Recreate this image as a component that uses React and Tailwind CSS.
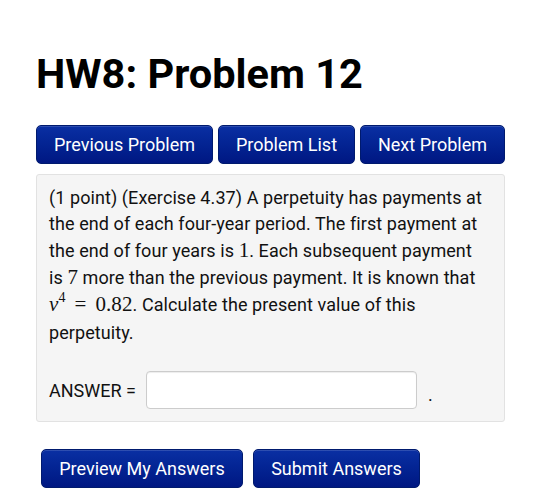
import React, { useState } from "react";

const btn =
  "h-[39px] rounded-[5px] border border-[#001a6e] bg-gradient-to-b from-[#0a2fa3] to-[#001782] text-white text-[18px] leading-none font-['Roboto',sans-serif] shadow-[inset_0_1px_0_rgba(255,255,255,0.15)]";

function M({ children, className = "" }) {
  return <span className={"font-['Liberation_Serif',serif] text-[21px] " + className}>{children}</span>;
}

export default function App() {
  const [answer, setAnswer] = useState("");

  return (
    <div className="min-h-[489px] w-[535px] bg-white font-['Roboto',sans-serif] text-[#111]">
      <div className="pl-[36px] pt-[51px]">
        <h1 className="text-[41.5px] leading-[46px] font-bold text-black">HW8: Problem 12</h1>

        <div className="mt-[28px] flex gap-[5px]">
          <button className={btn + " w-[177px]"}>Previous Problem</button>
          <button className={btn + " w-[137px]"}>Problem List</button>
          <button className={btn + " w-[145px]"}>Next Problem</button>
        </div>

        <div className="mt-[10px] w-[469px] rounded-[3px] border border-[#e2e2e2] bg-[#f5f5f5] px-[12px] pt-[10px] pb-[12px]">
          <p className="text-[18px] leading-[26px] whitespace-nowrap tracking-[0.08px]">
            (1 point) (Exercise 4.37) A perpetuity has payments at
            <br />
            the end of each four-year period. The first payment at
            <br />
            the end of four years is <M>1</M>. Each subsequent payment
            <br />
            is <M>7</M> more than the previous payment. It is known that
            <br />
            <M>
              <span className="italic">v</span>
              <span className="relative -top-[9px] text-[14px]">4</span>
              <span className="mx-[9px]">=</span>0.82
            </M>
            . Calculate the present value of this
            <br />
            perpetuity.
          </p>

          <div className="mt-[25px] flex items-center">
            <span className="text-[18px]">ANSWER =</span>
            <input
              value={answer}
              onChange={e => setAnswer(e.target.value)}
              className="ml-[10px] h-[38px] w-[271px] rounded-[4px] border border-[#cccccc] bg-white px-2 text-[18px] outline-none shadow-[inset_0_1px_1px_rgba(0,0,0,0.075)]"
            />
            <span className="ml-[11px] mt-[8px] text-[18px]">.</span>
          </div>
        </div>

        <div className="mt-[27px] ml-[5px] flex gap-[10px]">
          <button className={btn + " w-[202px]"}>Preview My Answers</button>
          <button className={btn + " w-[167px]"}>Submit Answers</button>
        </div>
      </div>
    </div>
  );
}
